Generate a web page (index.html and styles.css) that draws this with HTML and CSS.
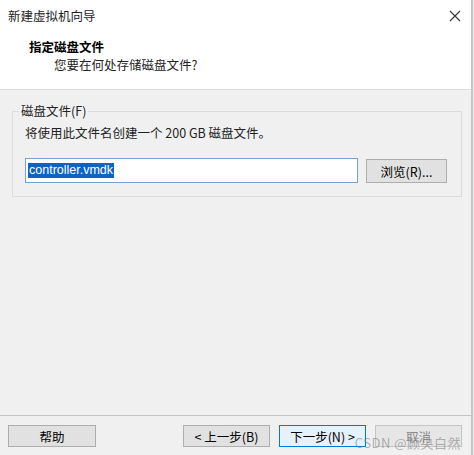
FILE: index.html
```html
<!DOCTYPE html>
<html>
    <head>
        <title>新建虚拟机向导</title>
        <link rel="stylesheet" href="styles.css">
    </head>
    <body>
        <div class="window">
            <div class="header">
                <div class="titlebar">
                    <span class="title">新建虚拟机向导</span>
                    <svg class="close" width="12" height="12" viewBox="0 0 12 12">
                        <path d="M1 1 L11 11 M11 1 L1 11" stroke="#333" stroke-width="1.1" fill="none"/>
                    </svg>
                </div>
                <div class="heading">指定磁盘文件</div>
                <div class="subheading">您要在何处存储磁盘文件?</div>
            </div>

            <div class="main">
                <fieldset class="group">
                    <legend>磁盘文件(F)</legend>
                    <div class="note">将使用此文件名创建一个 200 GB 磁盘文件。</div>
                    <div class="filerow">
                        <div class="input"><span class="sel">controller.vmdk</span></div>
                        <button class="btn browse">浏览(R)...</button>
                    </div>
                </fieldset>
            </div>

            <div class="footer">
                <button class="btn">帮助</button>
                <div class="nav">
                    <button class="btn">&lt; 上一步(B)</button>
                    <button class="btn default">下一步(N) &gt;</button>
                    <button class="btn disabled">取消</button>
                </div>
                <span class="mark">CSDN @顾央白然</span>
            </div>
        </div>
    </body>
</html>
```

FILE: styles.css
```css
body {
    margin: 0;
    background: #ececec;
    font-family: "Noto Sans CJK SC", "Microsoft YaHei", sans-serif;
    font-size: 12.5px;
    color: #000;
}
    .window {
        width: 471px;
        height: 455px;
        background: #f0f0f0;
        border-right: 2px solid #c6c6c6;
        display: flex;
        flex-direction: column;
    }
    .header {
        height: 90px;
        background: #fff;
        border-bottom: 1px solid #dcdcdc;
        box-sizing: border-box;
    }
    .titlebar {
        height: 31px;
        display: flex;
        align-items: center;
        justify-content: space-between;
        padding: 0 10px 0 8px;
    }
    .title {
        color: #222;
    }
    .heading {
        font-weight: bold;
        padding-left: 29px;
        margin-top: 7px;
        line-height: 18px;
    }
    .subheading {
        padding-left: 54px;
        line-height: 18px;
        color: #222;
    }
    .main {
        flex: 1;
        padding: 14px 9px 0 12px;
    }
    .group {
        margin: 0;
        border: 1px solid #dcdcdc;
        padding: 6px 12px 13px 12px;
    }
    .group legend {
        padding: 0 2px;
        margin-left: -6px;
        line-height: 14px;
        color: #222;
    }
    .note {
        line-height: 18px;
        color: #222;
    }
    .filerow {
        display: flex;
        align-items: flex-start;
        margin-top: 16px;
        gap: 8px;
    }
    .input {
        flex-shrink: 0;
        width: 333px;
        height: 25px;
        box-sizing: border-box;
        border: 1px solid #7a9fd2;
        background: #fff;
        display: flex;
        align-items: center;
        padding-left: 2px;
    }
    .sel {
        background: #0a64c8;
        color: #fff;
        font-family: "Liberation Sans", Arial, sans-serif;
        font-size: 12.5px;
        line-height: 15px;
        padding: 0 1px;
    }
    .btn {
        font: inherit;
        color: #000;
        height: 22px;
        width: 87px;
        padding: 0;
        background: #e1e1e1;
        border: 1px solid #adadad;
        box-sizing: border-box;
    }
    .browse {
        flex-shrink: 0;
        width: 81px;
        height: 24px;
        margin-top: 1px;
    }
    .footer {
        position: relative;
        height: 40px;
        border-top: 1px solid #c4c4c4;
        display: flex;
        align-items: flex-start;
        justify-content: space-between;
        padding: 9px 9px 0 8px;
        box-sizing: border-box;
    }
    .footer > .btn {
        width: 88px;
    }
    .nav {
        display: flex;
        gap: 9px;
    }
    .default {
        border-color: #0078d7;
        background: #e5f1fb;
    }
    .disabled {
        color: #8a8a8a;
        border-color: #c4c4c4;
        background: #e6e6e6;
    }
    .mark {
        position: absolute;
        right: 10px;
        top: 17px;
        font-size: 13px;
        color: rgba(120,120,120,0.55);
        letter-spacing: 0.5px;
        white-space: nowrap;
    }
```
